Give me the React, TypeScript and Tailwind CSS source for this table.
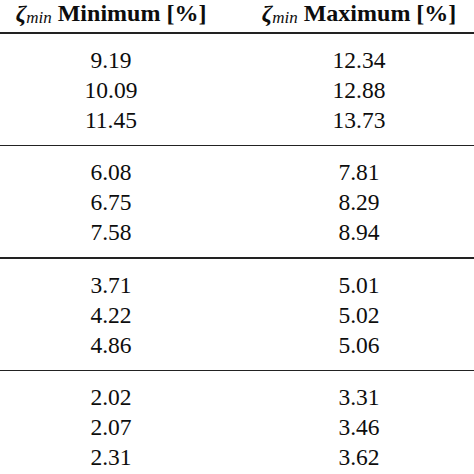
const groups: [string, string][][] = [
  [
    ["9.19", "12.34"],
    ["10.09", "12.88"],
    ["11.45", "13.73"],
  ],
  [
    ["6.08", "7.81"],
    ["6.75", "8.29"],
    ["7.58", "8.94"],
  ],
  [
    ["3.71", "5.01"],
    ["4.22", "5.02"],
    ["4.86", "5.06"],
  ],
  [
    ["2.02", "3.31"],
    ["2.07", "3.46"],
    ["2.31", "3.62"],
  ],
];

function HeaderCell({ label }: { label: string }) {
  return (
    <div className="flex justify-center whitespace-nowrap">
      <span className="font-bold italic">ζ</span>
      <span className="relative top-[4px] mr-[6px] text-[17px] italic leading-none self-center">
        min
      </span>
      <span className="font-bold">{label}</span>
    </div>
  );
}

export default function App() {
  return (
    <div
      className="w-[474px] h-[474px] overflow-hidden bg-white text-[#0d0d0d]"
      style={{ fontFamily: '"Liberation Serif", serif' }}
    >
      <div className="pt-[1px] grid grid-cols-[222px_1fr] text-[24px] leading-[24px]">
        <HeaderCell label="Minimum [%]" />
        <div className="pl-[22px]">
          <HeaderCell label="Maximum [%]" />
        </div>
      </div>
      <div className="mt-[7px] h-[1.5px] bg-[#222]" />
      {groups.map((group, gi) => (
        <div key={gi}>
          <div className="pt-[11px] pb-[10px]">
            {group.map(([min, max]) => (
              <div
                key={min}
                className="grid grid-cols-[222px_1fr] text-[23.5px] leading-[30px]"
              >
                <div className="text-center">{min}</div>
                <div className="pl-[22px] text-center">{max}</div>
              </div>
            ))}
          </div>
          {gi < groups.length - 1 && <div className="h-[1.5px] bg-[#222]" />}
        </div>
      ))}
    </div>
  );
}
